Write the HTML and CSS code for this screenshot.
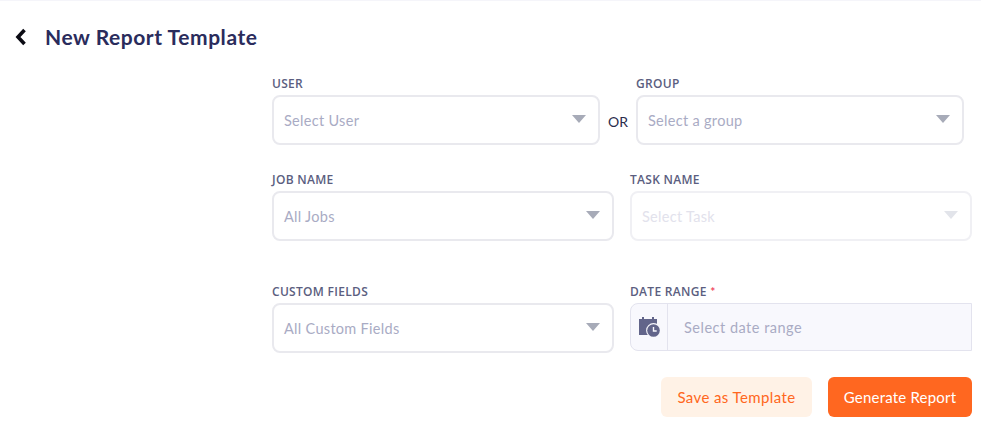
FILE: index.html
```html
<!DOCTYPE html>
<html lang="en">
<head>
    <meta charset="UTF-8">
    <title>New Report Template</title>
    <link rel="stylesheet" href="styles.css">
</head>
<body>
    <header class="page-head">
        <svg class="back-icon" width="12" height="18" viewBox="0 0 12 18"><path d="M9.5 2 L3 9 L9.5 16" fill="none" stroke="#0b0b14" stroke-width="3.6"/></svg>
        <h1>New Report Template</h1>
    </header>
    <form class="report-form">
        <div class="row row-user">
            <div class="field">
                <label>USER</label>
                <div class="select"><span>Select User</span><i class="caret"></i></div>
            </div>
            <span class="or">OR</span>
            <div class="field">
                <label>GROUP</label>
                <div class="select"><span>Select a group</span><i class="caret"></i></div>
            </div>
        </div>
        <div class="row row-job">
            <div class="field">
                <label>JOB NAME</label>
                <div class="select"><span>All Jobs</span><i class="caret"></i></div>
            </div>
            <div class="field">
                <label>TASK NAME</label>
                <div class="select disabled"><span>Select Task</span><i class="caret"></i></div>
            </div>
        </div>
        <div class="row row-custom">
            <div class="field">
                <label>CUSTOM FIELDS</label>
                <div class="select"><span>All Custom Fields</span><i class="caret"></i></div>
            </div>
            <div class="field">
                <label>DATE RANGE <em>*</em></label>
                <div class="date-input">
                    <div class="date-icon">
                        <svg width="21" height="20" viewBox="0 0 21 20">
                            <path d="M0 2h3V0h2v2h8V0h2v2h3v16H0z" fill="#62658a"/>
                            <circle cx="14.5" cy="13.5" r="7.4" fill="#f8f8fd"/>
                            <circle cx="14.5" cy="13.5" r="6.3" fill="#62658a"/>
                            <path d="M14.5 10v4h3.2" fill="none" stroke="#f8f8fd" stroke-width="1.4"/>
                        </svg>
                    </div>
                    <span>Select date range</span>
                </div>
            </div>
        </div>
        <div class="actions">
            <button type="button" class="btn-save">Save as Template</button>
            <button type="button" class="btn-generate">Generate Report</button>
        </div>
    </form>
</body>
</html>
```

FILE: styles.css
```css
body {
    margin: 0;
    font-family: "Lato", "Noto Sans", sans-serif;
    background-color: #fff;
    border-top: 1px solid #f5f5fa;
}
.page-head {
    display: flex;
    align-items: center;
    height: 70px;
    padding-bottom: 2px;
    padding-left: 15px;
}
.back-icon {
    margin-right: 18px;
    margin-top: 1px;
}
h1 {
    margin: 0;
    font-size: 21px;
    font-weight: 700;
    color: #2a2c5c;
    letter-spacing: 0.55px;
}
.report-form {
    width: 700px;
    margin-left: 272px;
}
.row {
    display: flex;
    gap: 16px;
}
.row-user {
    width: 692px;
    gap: 0;
    margin-bottom: 24px;
}
.row-job {
    margin-bottom: 40px;
}
.row-custom {
    margin-bottom: 24px;
}
.field {
    flex: 1;
}
label {
    display: block;
    height: 22px;
    padding-top: 3px;
    box-sizing: border-box;
    font-family: "Open Sans", sans-serif;
    font-size: 12px;
    font-weight: 600;
    line-height: 15px;
    letter-spacing: 0.3px;
    color: #5b5e80;
}
label em {
    font-family: "Lato", sans-serif;
    font-style: normal;
    font-weight: 700;
    color: #ef4a5f;
}
.select {
    display: flex;
    align-items: center;
    justify-content: space-between;
    box-sizing: border-box;
    height: 50px;
    padding: 1px 12px 0 10px;
    border: 2px solid #e9e9ee;
    border-radius: 8px;
    font-size: 14.5px;
    letter-spacing: 0.3px;
    color: #a9abc4;
}
.caret {
    width: 0;
    height: 0;
    margin-top: -3px;
    border-left: 7px solid transparent;
    border-right: 7px solid transparent;
    border-top: 8px solid #a7abb8;
}
.or {
    width: 36px;
    padding-top: 40px;
    text-align: center;
    font-size: 14px;
    color: #2a2c4c;
}
.select.disabled {
    border-color: #f0f0f4;
    color: #e2e2ec;
}
.select.disabled .caret {
    border-top-color: #e2e4ea;
}
.date-input {
    display: flex;
    align-items: center;
    box-sizing: border-box;
    height: 48px;
    border: 1px solid #e3e3ee;
    border-radius: 8px 0 0 8px;
    background-color: #f8f8fd;
    font-size: 14.5px;
    letter-spacing: 0.5px;
    color: #a9abc4;
}
.date-icon {
    display: flex;
    align-items: center;
    justify-content: center;
    width: 36px;
    height: 100%;
    margin-right: 16px;
    border-right: 1px solid #e3e3ee;
}
.actions {
    display: flex;
    justify-content: flex-end;
    gap: 16px;
}
.actions button {
    height: 40px;
    border: none;
    border-radius: 6px;
    font-family: inherit;
    font-size: 15px;
    letter-spacing: 0.4px;
}
.btn-save {
    width: 151px;
    background-color: #fff2e6;
    color: #ff6720;
}
.actions .btn-generate {
    width: 144px;
    letter-spacing: 0.2px;
    background-color: #ff6720;
    color: #fff;
}
```
